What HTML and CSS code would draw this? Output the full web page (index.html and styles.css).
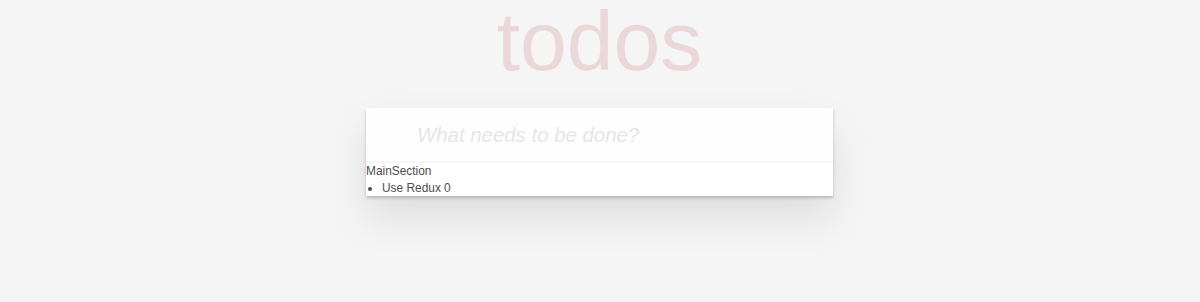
FILE: index.html
```html
<!DOCTYPE html>
<html lang="en">
<head>
<meta charset="UTF-8" />
<title>Redux TodoMVC</title>
<link rel="stylesheet" href="styles.css">
</head>
<body>
<div class="todoapp">
  <header class="header">
    <h1>todos</h1>
    <div class="panel">
      <input class="new-todo" type="text" placeholder="What needs to be done?" autofocus="">
      <section class="main">
        <div>MainSection</div>
        <ul class="todo-list">
          <li>Use Redux 0</li>
        </ul>
      </section>
    </div>
  </header>
</div>
</body>
</html>
```

FILE: styles.css
```css
/* Base */
html, body {
  margin: 0;
  padding: 0;
}
body {
  min-height: 100vh;
  padding-right: 1px;
  font: 11.9px 'Helvetica Neue', Helvetica, 'Liberation Sans', Arial, sans-serif;
  line-height: 1.4em;
  background: #f5f5f5;
  color: #4d4d4d;
  -webkit-font-smoothing: antialiased;
}
.todoapp {
  width: 467px;
  margin: 0 auto;
  padding-bottom: 60px;
}
.header h1 {
  margin: 0;
  height: 108px;
  font-size: 84px;
  line-height: 83px;
  font-weight: 100;
  text-align: center;
  color: rgba(175, 47, 47, 0.15);
  text-rendering: optimizeLegibility;
}
.panel {
  background: #fff;
  box-shadow:
    0 2px 3px 0 rgba(0, 0, 0, 0.2),
    0 21px 42px 0 rgba(0, 0, 0, 0.1);
}
.new-todo {
  display: block;
  width: 100%;
  height: 55px;
  margin: 0;
  padding: 0 14px 0 51px;
  box-sizing: border-box;
  border: none;
  outline: none;
  background: rgba(0, 0, 0, 0.003);
  box-shadow: inset 0 -2px 1px rgba(0, 0, 0, 0.03);
  font-family: inherit;
  font-size: 20.4px;
  color: inherit;
}
.new-todo::placeholder {
  font-style: italic;
  font-weight: 300;
  color: #e6e6e6;
}
.main div {
  line-height: 16.5px;
}
.todo-list {
  margin: 0;
  padding: 0 0 0 16px;
  line-height: 16.5px;
}
```
